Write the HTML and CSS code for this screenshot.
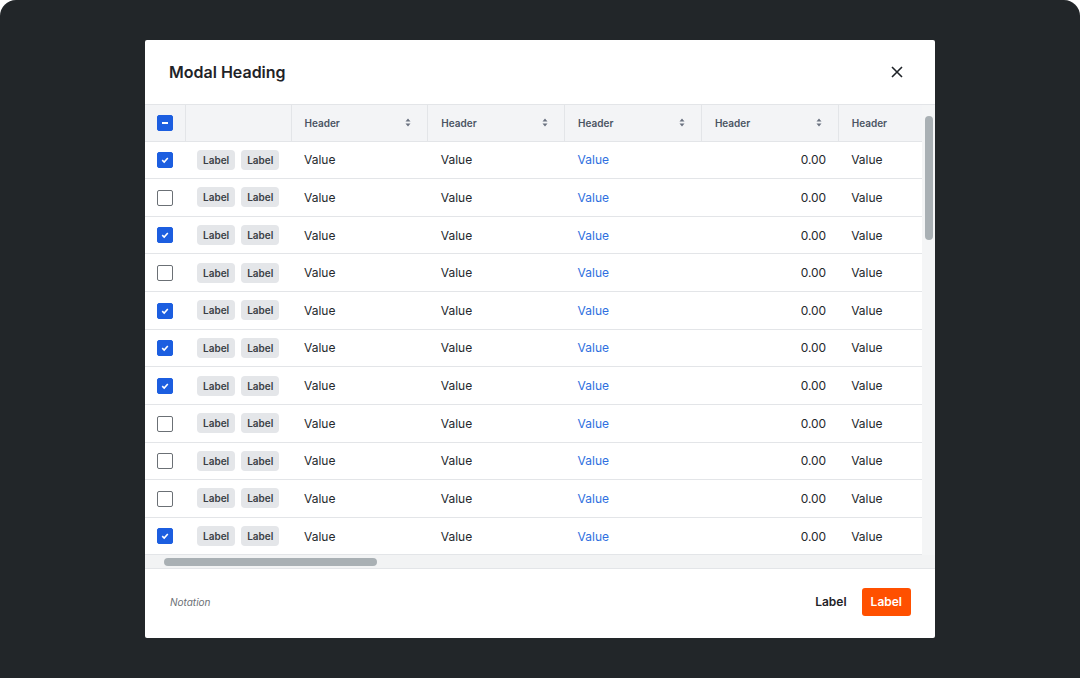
FILE: index.html
```html
<!DOCTYPE html>
<html lang="en">
<head>
<meta charset="utf-8">
<title>Modal</title>
<link rel="stylesheet" href="styles.css">
</head>
<body>
<div class="screen">
  <div class="modal">
    <div class="modal-header">
      <h1 class="modal-title">Modal Heading</h1>
      <button class="close-btn" aria-label="Close">
        <svg width="12" height="12" viewBox="0 0 12 12"><path d="M1 1L11 11M11 1L1 11" stroke="#1f2328" stroke-width="1.6" fill="none"/></svg>
      </button>
    </div>
    <div class="table-area">
      <div class="table-row-wrap">
        <div class="viewport">
          <table class="grid">
            <colgroup>
              <col class="c-check"><col class="c-tags"><col class="c-data"><col class="c-data"><col class="c-data"><col class="c-data"><col class="c-data">
            </colgroup>
            <thead>
              <tr>
                <th class="cell-check"><span class="cb cb-ind"><svg width="10" height="10" viewBox="0 0 10 10"><path d="M2 5H8" stroke="#fff" stroke-width="1.8"/></svg></span></th>
                <th></th>
                <th><div class="th-in"><span>Header</span><svg class="sort" width="6" height="9" viewBox="0 0 6 9"><path d="M3 0.5L5.5 3.5H0.5Z M3 8.5L0.5 5.5H5.5Z" fill="#6b7280"/></svg></div></th>
                <th><div class="th-in"><span>Header</span><svg class="sort" width="6" height="9" viewBox="0 0 6 9"><path d="M3 0.5L5.5 3.5H0.5Z M3 8.5L0.5 5.5H5.5Z" fill="#6b7280"/></svg></div></th>
                <th><div class="th-in"><span>Header</span><svg class="sort" width="6" height="9" viewBox="0 0 6 9"><path d="M3 0.5L5.5 3.5H0.5Z M3 8.5L0.5 5.5H5.5Z" fill="#6b7280"/></svg></div></th>
                <th><div class="th-in"><span>Header</span><svg class="sort" width="6" height="9" viewBox="0 0 6 9"><path d="M3 0.5L5.5 3.5H0.5Z M3 8.5L0.5 5.5H5.5Z" fill="#6b7280"/></svg></div></th>
                <th><div class="th-in"><span>Header</span></div></th>
              </tr>
            </thead>
            <tbody>
              <tr><td class="cell-check"><span class="cb cb-on"><svg width="10" height="10" viewBox="0 0 10 10"><path d="M2.2 5.2L4.2 7L7.8 3" stroke="#fff" stroke-width="1.6" fill="none"/></svg></span></td><td class="cell-tags"><span class="tag">Label</span><span class="tag">Label</span></td><td>Value</td><td>Value</td><td class="link">Value</td><td class="num">0.00</td><td>Value</td></tr>
              <tr><td class="cell-check"><span class="cb"></span></td><td class="cell-tags"><span class="tag">Label</span><span class="tag">Label</span></td><td>Value</td><td>Value</td><td class="link">Value</td><td class="num">0.00</td><td>Value</td></tr>
              <tr><td class="cell-check"><span class="cb cb-on"><svg width="10" height="10" viewBox="0 0 10 10"><path d="M2.2 5.2L4.2 7L7.8 3" stroke="#fff" stroke-width="1.6" fill="none"/></svg></span></td><td class="cell-tags"><span class="tag">Label</span><span class="tag">Label</span></td><td>Value</td><td>Value</td><td class="link">Value</td><td class="num">0.00</td><td>Value</td></tr>
              <tr><td class="cell-check"><span class="cb"></span></td><td class="cell-tags"><span class="tag">Label</span><span class="tag">Label</span></td><td>Value</td><td>Value</td><td class="link">Value</td><td class="num">0.00</td><td>Value</td></tr>
              <tr><td class="cell-check"><span class="cb cb-on"><svg width="10" height="10" viewBox="0 0 10 10"><path d="M2.2 5.2L4.2 7L7.8 3" stroke="#fff" stroke-width="1.6" fill="none"/></svg></span></td><td class="cell-tags"><span class="tag">Label</span><span class="tag">Label</span></td><td>Value</td><td>Value</td><td class="link">Value</td><td class="num">0.00</td><td>Value</td></tr>
              <tr><td class="cell-check"><span class="cb cb-on"><svg width="10" height="10" viewBox="0 0 10 10"><path d="M2.2 5.2L4.2 7L7.8 3" stroke="#fff" stroke-width="1.6" fill="none"/></svg></span></td><td class="cell-tags"><span class="tag">Label</span><span class="tag">Label</span></td><td>Value</td><td>Value</td><td class="link">Value</td><td class="num">0.00</td><td>Value</td></tr>
              <tr><td class="cell-check"><span class="cb cb-on"><svg width="10" height="10" viewBox="0 0 10 10"><path d="M2.2 5.2L4.2 7L7.8 3" stroke="#fff" stroke-width="1.6" fill="none"/></svg></span></td><td class="cell-tags"><span class="tag">Label</span><span class="tag">Label</span></td><td>Value</td><td>Value</td><td class="link">Value</td><td class="num">0.00</td><td>Value</td></tr>
              <tr><td class="cell-check"><span class="cb"></span></td><td class="cell-tags"><span class="tag">Label</span><span class="tag">Label</span></td><td>Value</td><td>Value</td><td class="link">Value</td><td class="num">0.00</td><td>Value</td></tr>
              <tr><td class="cell-check"><span class="cb"></span></td><td class="cell-tags"><span class="tag">Label</span><span class="tag">Label</span></td><td>Value</td><td>Value</td><td class="link">Value</td><td class="num">0.00</td><td>Value</td></tr>
              <tr><td class="cell-check"><span class="cb"></span></td><td class="cell-tags"><span class="tag">Label</span><span class="tag">Label</span></td><td>Value</td><td>Value</td><td class="link">Value</td><td class="num">0.00</td><td>Value</td></tr>
              <tr><td class="cell-check"><span class="cb cb-on"><svg width="10" height="10" viewBox="0 0 10 10"><path d="M2.2 5.2L4.2 7L7.8 3" stroke="#fff" stroke-width="1.6" fill="none"/></svg></span></td><td class="cell-tags"><span class="tag">Label</span><span class="tag">Label</span></td><td>Value</td><td>Value</td><td class="link">Value</td><td class="num">0.00</td><td>Value</td></tr>
            </tbody>
          </table>
        </div>
        <div class="vtrack"><div class="vthumb"></div></div>
      </div>
      <div class="htrack"><div class="hthumb"></div></div>
    </div>
    <div class="modal-footer">
      <span class="notation">Notation</span>
      <div class="actions">
        <button class="btn btn-ghost">Label</button>
        <button class="btn btn-primary">Label</button>
      </div>
    </div>
  </div>
</div>
</body>
</html>
```
FILE: styles.css
```css
* { box-sizing: border-box; }
html, body { margin: 0; padding: 0; background: #ffffff; }
body { font-family: Inter, "Noto Sans", "Liberation Sans", sans-serif; color: #1f2328; }

.screen {
  width: 1080px;
  height: 678px;
  background: #222629;
  border-radius: 16px 16px 0 0;
  padding: 40px 145px 0 145px;
  overflow: hidden;
}

.modal {
  width: 790px;
  height: 598px;
  background: #ffffff;
  border-radius: 2px;
  display: flex;
  flex-direction: column;
  overflow: hidden;
}

.modal-header {
  height: 64px;
  flex: none;
  display: flex;
  align-items: center;
  justify-content: space-between;
  padding: 0 29px 0 24px;
}
.modal-title {
  margin: 0;
  font-size: 16px;
  font-weight: 600;
  color: #1f2328;
  letter-spacing: 0;
  padding-bottom: 1px;
}
.close-btn {
  border: 0;
  background: transparent;
  padding: 3px;
  width: 18px;
  height: 18px;
  display: flex;
  align-items: center;
  justify-content: center;
  cursor: pointer;
}

.table-area {
  flex: none;
  height: 464px;
  display: flex;
  flex-direction: column;
  border-top: 1px solid #e3e5e8;
}
.table-row-wrap {
  flex: 1;
  display: flex;
  min-height: 0;
}
.viewport {
  flex: 1;
  overflow: hidden;
  min-width: 0;
}
.vtrack {
  width: 13px;
  flex: none;
  background: #f4f5f6;
  padding: 11px 2px 0 3px;
}
.vthumb {
  width: 8px;
  height: 124px;
  border-radius: 4px;
  background: #a9b0b4;
}
.htrack {
  height: 13px;
  flex: none;
  background: #f2f3f4;
  padding: 3px 0 0 19px;
}
.hthumb {
  width: 213px;
  height: 8px;
  border-radius: 4px;
  background: #a9b0b4;
}

.grid {
  border-collapse: collapse;
  table-layout: fixed;
  width: 830px;
  font-size: 12px;
}
.c-check { width: 40px; }
.c-tags { width: 106px; }
.c-data { width: 136.8px; }

.grid th {
  height: 36px;
  background: #f3f4f6;
  border-bottom: 1px solid #e3e5e8;
  border-right: 1px solid #e3e5e8;
  padding: 0 12px 0 13px;
  text-align: left;
  font-size: 10px;
  font-weight: 600;
  color: #4b5563;
}
.grid th.cell-check { padding: 0; text-align: center; }
.th-in {
  display: flex;
  align-items: center;
  justify-content: space-between;
}
.sort { margin-right: 4px; }

.grid td {
  height: 37.64px;
  border-bottom: 1px solid #e3e5e8;
  padding: 0 12px 0 13px;
  color: #25292d;
  white-space: nowrap;
  overflow: hidden;
}
.grid td.cell-check { padding: 0; text-align: center; }
.grid td.cell-tags { padding: 0 6px 0 12px; }
.grid td.link { color: #2f6fe0; }
.grid td.num { text-align: right; }

.cb {
  display: inline-flex;
  align-items: center;
  justify-content: center;
  width: 16px;
  height: 16px;
  border-radius: 2px;
  border: 1.5px solid #6b7075;
  background: #fff;
  vertical-align: middle;
}
.cb-on, .cb-ind {
  background: #1c5ee0;
  border-color: #1c5ee0;
}

.tag {
  display: inline-block;
  height: 20px;
  line-height: 20px;
  padding: 0 6px;
  border-radius: 4px;
  background: #e4e6e9;
  color: #3a3f45;
  font-size: 10px;
  font-weight: 600;
  vertical-align: middle;
}
.tag + .tag { margin-left: 6px; }

.modal-footer {
  flex: 1;
  display: flex;
  align-items: center;
  justify-content: space-between;
  border-top: 1px solid #e3e5e8;
  padding: 0 24px 4px 25px;
}
.notation {
  font-size: 10px;
  font-style: italic;
  color: #6b7075;
  padding-top: 1px;
}
.actions {
  display: flex;
  align-items: center;
  gap: 3px;
}
.btn {
  border: 0;
  font-family: Inter, "Noto Sans", "Liberation Sans", sans-serif;
  font-size: 12px;
  font-weight: 600;
  height: 28px;
  border-radius: 3px;
  cursor: pointer;
}
.btn-ghost {
  background: transparent;
  color: #1f2328;
  padding: 0 12px;
}
.btn-primary {
  background: #ff5000;
  color: #ffffff;
  padding: 0 9px;
}
```
